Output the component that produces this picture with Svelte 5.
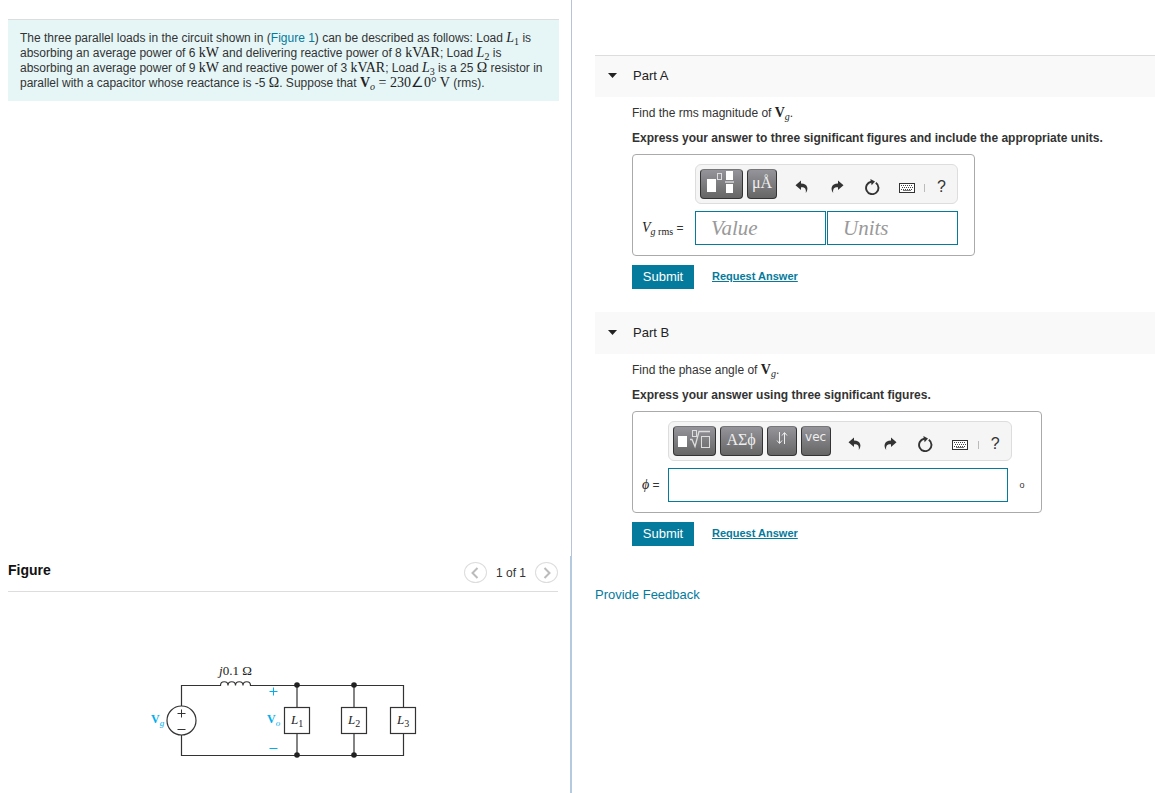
<script>
  const parts = [
    { id: 'a', title: 'Part A', ask: 'Find the rms magnitude of', hint: 'Express your answer to three significant figures and include the appropriate units.' },
    { id: 'b', title: 'Part B', ask: 'Find the phase angle of', hint: 'Express your answer using three significant figures.' }
  ];
  const loads = [
    { x: 297, n: 1 },
    { x: 354, n: 2 },
    { x: 403, n: 3 }
  ];
  let open = $state({ a: true, b: true });
  let value = $state('');
  let units = $state('');
  let phase = $state('');

  function clear(id) {
    if (id === 'a') {
      value = '';
      units = '';
    } else {
      phase = '';
    }
  }
</script>

{#snippet tools(id)}
  <div class="tools">
    <button class="tool" type="button" aria-label="Undo">
      <svg width="14" height="14" viewBox="0 0 14 14"><path d="M6 0.5 0.5 5.3 6 10V7.2C9.8 7 11.4 8.6 10.8 13 13.8 9 13 3.6 6 3.4Z" fill="#333" /></svg>
    </button>
    <button class="tool" type="button" aria-label="Redo">
      <svg width="14" height="14" viewBox="0 0 14 14"><path d="M8 0.5 13.5 5.3 8 10V7.2C4.2 7 2.6 8.6 3.2 13 0.2 9 1 3.6 8 3.4Z" fill="#333" /></svg>
    </button>
    <button class="tool" type="button" aria-label="Reset" onclick={() => clear(id)}>
      <svg width="16" height="16" viewBox="0 0 16 16"><path d="M11.8 3.8A6.200 6.200 0 1 1 7.200 2.800" fill="none" stroke="#333" stroke-width="1.900" /><path d="M6.4 0 11 2.6 7.6 6.2Z" fill="#333" /></svg>
    </button>
    <button class="tool" type="button" aria-label="Keyboard shortcuts">
      <svg class="low" width="18" height="12" viewBox="0 0 18 12">
        <rect x="1.500" y="1.500" width="15" height="9" fill="#fff" stroke="#333" />
        <path d="M3 3.5H15M4 5.5H15M3 7.5H15" stroke="#444" stroke-dasharray="1 1" />
        <path d="M5 8.500H13" stroke="#777" />
      </svg>
    </button>
    <button class="tool help" type="button" aria-label="Help">?</button>
  </div>
{/snippet}

<div class="page">
  <div class="left">
    <section class="problem">
      <p class="intro">
        The three parallel loads in the circuit shown in (<a href="#figure">Figure 1</a>) can be described as follows: Load <span class="m"><i>L</i><sub>1</sub></span> is absorbing an average power of 6 <span class="m">kW</span> and delivering reactive power of 8 <span class="m">kVAR</span>; Load <span class="m"><i>L</i><sub>2</sub></span> is absorbing an average power of 9 <span class="m">kW</span> and reactive power of 3 <span class="m">kVAR</span>; Load <span class="m"><i>L</i><sub>3</sub></span> is a 25 <span class="m">Ω</span> resistor in parallel with a capacitor whose reactance is -5 <span class="m">Ω</span>. Suppose that <span class="m"><b>V</b><sub><i>o</i></sub> = 230∠0° V</span> (rms).
      </p>
    </section>

    <section class="figure" id="figure">
      <header>
        <h2>Figure</h2>
        <nav aria-label="Figures">
          <button class="round" type="button" aria-label="Previous figure">
            <svg width="8" height="12" viewBox="0 0 8 12"><path d="M6.5 1 1.5 6 6.5 11" fill="none" stroke="#bbb" stroke-width="2" /></svg>
          </button>
          <span>1 of 1</span>
          <button class="round" type="button" aria-label="Next figure">
            <svg width="8" height="12" viewBox="0 0 8 12"><path d="M1.5 1 6.5 6 1.5 11" fill="none" stroke="#bbb" stroke-width="2" /></svg>
          </button>
        </nav>
      </header>
      <svg class="circuit" width="270" height="100" viewBox="150 662 270 100" role="img" aria-label="Circuit with source, line reactance and three loads">
        <g fill="none" stroke="#333" stroke-width="1.2">
          <path d="M181.5 706V685.5H220.5C220.5 680.5 228 680.5 228 685.5 228 680.5 235.5 680.5 235.5 685.5 235.5 680.5 243 680.5 243 685.5 243 680.5 250.5 680.5 250.5 685.5H403.5V707M181.5 735V755.5H403.5V734" />
          <path d="M297 685V755M354 685V755" />
          <circle cx="181.5" cy="720.5" r="14.5" />
          <path d="M177.5 713.5H185.5M181.5 709.5V717.5M177.5 729.5H185.5" stroke-width="1" />
        </g>
        {#each loads as load}
          <rect x={load.x - 12.5} y="707.5" width="25" height="26" fill="#fff" stroke="#333" stroke-width="1.2" />
          <text class="dark" x={load.x - 6} y="724"><tspan font-style="italic">L</tspan><tspan font-size="10" dy="3">{load.n}</tspan></text>
        {/each}
        <g fill="#222">
          <circle cx="297" cy="685" r="2.8" />
          <circle cx="354" cy="685" r="2.8" />
          <circle cx="297" cy="755" r="2.8" />
          <circle cx="354" cy="755" r="2.8" />
        </g>
        <text class="dark" x="219" y="675"><tspan font-style="italic">j</tspan>0.1 Ω</text>
        <path d="M269.5 691.5H277.5M273.5 687.5V695.5M269.5 748.5H277.5" stroke="#00aeef" fill="none" />
        <text class="blue" x="151" y="723">V<tspan class="sub" dy="3">g</tspan></text>
        <text class="blue" x="267" y="723">V<tspan class="sub" dy="3">o</tspan></text>
      </svg>
    </section>
  </div>

  <main class="right">
    {#each parts as part}
      <section class="part {part.id}">
        <button class="bar" type="button" aria-expanded={open[part.id]} onclick={() => (open[part.id] = !open[part.id])}>
          <svg width="9" height="5" viewBox="0 0 9 5"><path d="M0 0H9L4.5 5Z" fill="#222" /></svg>
          {part.title}
        </button>
        {#if open[part.id]}
          <div class="body">
            <p>{part.ask} <span class="m"><b>V</b><sub><i>g</i></sub></span>.</p>
            <p class="hint">{part.hint}</p>

            {#if part.id === 'a'}
              <div class="answer">
                <div class="toolbar">
                  <button class="key wide" type="button" aria-label="Templates">
                    <svg width="30" height="24" viewBox="0 0 30 24"><path d="M0 9H9V22H0ZM19 1H26V10H19ZM19 14H26V23H19ZM18 11.5H27V12.5H18Z" fill="#fff" /><rect x="10.5" y="3.5" width="4" height="6" fill="none" stroke="#ddd" /></svg>
                  </button>
                  <button class="key" type="button" aria-label="Units">μÅ</button>
                  {@render tools('a')}
                </div>
                <label class="name" for="value"><span class="m"><i>V</i><sub><i>g</i> rms</sub></span> =</label>
                <div class="fields">
                  <input id="value" placeholder="Value" bind:value />
                  <input aria-label="Units" placeholder="Units" bind:value={units} />
                </div>
              </div>
            {:else}
              <div class="answer">
                <div class="toolbar">
                  <button class="key wide" type="button" aria-label="Templates">
                    <svg width="34" height="22" viewBox="0 0 34 22"><path d="M1 9H10V20H1Z" fill="#fff" /><g fill="none" stroke="#ddd"><rect x="15.5" y="3.5" width="4" height="6" /><path d="M13 12.5H15L18 19.5 22 4.5H33" stroke-width="1.3" /><rect x="24.5" y="9.5" width="8" height="11" /></g></svg>
                  </button>
                  <button class="key wide" type="button" aria-label="Greek letters">ΑΣϕ</button>
                  <button class="key" type="button" aria-label="Sub and superscript">
                    <svg width="12" height="20" viewBox="0 -4 12 20"><path d="M3.5 1V12M1 9.5 3.5 12.5 6 9.5M8.5 13V2M6 4.5 8.5 1.5 11 4.5" fill="none" stroke="#eee" /></svg>
                  </button>
                  <button class="key vec" type="button">vec</button>
                  {@render tools('b')}
                </div>
                <label class="name" for="phase"><span class="m"><i>ϕ</i></span> =</label>
                <div class="fields">
                  <input id="phase" bind:value={phase} />
                </div>
                <span class="degree">o</span>
              </div>
            {/if}

            <div class="actions">
              <button class="submit" type="button">Submit</button>
              <a href="#request">Request Answer</a>
            </div>
          </div>
        {/if}
      </section>
    {/each}
    <a class="feedback" href="#feedback">Provide Feedback</a>
  </main>
</div>

<style>
  :global(body) {
    margin: 0;
    background: #fff;
  }
  .page {
    display: grid;
    grid-template-columns: 572fr 583fr;
    min-height: 100vh;
    font: 12px/15px "Liberation Sans", Arial, sans-serif;
    color: #333;
  }
  button,
  input {
    font: inherit;
    box-sizing: border-box;
  }
  button {
    padding: 0;
    border: 0;
    background: none;
    cursor: pointer;
  }
  p,
  h2 {
    margin: 0;
  }
  a {
    color: #047a9c;
    text-decoration: none;
  }
  .m {
    font: 14px/0 "Liberation Serif", "Times New Roman", serif;
    color: #222;
  }
  .m sub {
    font-size: 10px;
    line-height: 0;
    vertical-align: -3px;
  }

  .left {
    display: flex;
    flex-direction: column;
  }
  .problem {
    flex: 1;
    padding: 19px 12px 0 8px;
    border-right: 1px solid #b5c4d8;
  }
  .intro {
    padding: 11px 11px 10px 12px;
    border-top: 1px solid #ddd;
    background: #e6f6f7;
  }
  .figure {
    padding: 0 12px 31px 8px;
    border-right: 2px solid #b5c9df;
  }
  .figure header {
    display: flex;
    justify-content: space-between;
    height: 35px;
    border-bottom: 1px solid #ddd;
  }
  h2 {
    font-size: 14px;
    line-height: 28px;
    color: #111;
  }
  nav {
    display: flex;
    align-items: center;
    gap: 9px;
    height: 33px;
  }
  nav span {
    padding-top: 2px;
  }
  .round {
    display: flex;
    align-items: center;
    justify-content: center;
    width: 23px;
    height: 21px;
    border: 1px solid #ddd;
    border-radius: 50%;
  }
  .circuit {
    display: block;
    margin: 70px auto 0 142px;
    font: 13px "Liberation Serif", "Times New Roman", serif;
  }
  .dark {
    fill: #222;
  }
  .blue {
    fill: #00aeef;
    font-weight: bold;
    font-size: 12px;
  }
  .sub {
    font-size: 9px;
    font-style: italic;
    font-weight: normal;
  }

  .right {
    padding: 55px 0 0 23px;
  }
  .part {
    margin-bottom: 23px;
  }
  .part.a .bar {
    border-top: 1px solid #ddd;
  }
  .bar {
    display: flex;
    align-items: center;
    gap: 16px;
    width: 100%;
    height: 42px;
    padding: 0 0 2px 13px;
    background: #f9f9f9;
    color: #222;
    font-size: 13px;
  }
  .body {
    padding-left: 37px;
  }
  .body p {
    padding-top: 9px;
    margin-bottom: 1px;
  }
  .body .hint {
    margin-bottom: 8px;
    font-weight: bold;
  }
  .answer {
    display: grid;
    grid-template-columns: repeat(3, auto);
    align-items: center;
    row-gap: 7px;
    width: fit-content;
    padding: 9px 16px 10px 9px;
    border: 1px solid #aaa;
    border-radius: 4px;
  }
  .toolbar {
    grid-column: 2;
    display: flex;
    align-items: center;
    gap: 4px;
    padding: 4px 0 4px 4px;
    border: 1px solid #ddd;
    border-radius: 6px;
    background: #f5f5f5;
  }
  .key {
    display: flex;
    justify-content: center;
    width: 30px;
    height: 30px;
    border: 1px solid #333;
    border-top-color: #777;
    border-radius: 4px;
    background: linear-gradient(#94949a, #666);
    color: #eee;
    font: 16px/25px "Liberation Serif", serif;
  }
  .wide {
    width: 43px;
  }
  .vec {
    font: 12px/20px "DejaVu Sans", sans-serif;
  }
  .tools {
    display: flex;
    padding-left: 3px;
  }
  .tool {
    display: flex;
    align-items: center;
    justify-content: center;
    width: 35px;
    height: 30px;
    padding-top: 5px;
  }
  .help {
    width: 33px;
    padding-left: 2px;
    color: #333;
    font-size: 16px;
    background: linear-gradient(#bbb, #bbb) 0 15px / 1px 8px no-repeat;
  }
  .low {
    margin-top: 2px;
  }
  .name {
    grid-column: 1;
    padding-right: 8px;
    white-space: nowrap;
  }
  .part.a .name {
    min-width: 45px;
  }
  .fields {
    display: flex;
    gap: 1px;
  }
  .fields input {
    flex: 1;
    min-width: 0;
    width: 0;
    height: 34px;
    padding: 0 15px;
    border: 1px solid #047a9c;
    border-radius: 0;
    font: 21px "Liberation Serif", serif;
  }
  .fields input::placeholder {
    color: #999;
    font-style: italic;
  }
  .degree {
    padding-left: 8px;
    font-size: 9px;
  }
  .part.b .fields {
    padding-right: 4px;
  }
  .actions {
    display: flex;
    align-items: center;
    gap: 18px;
    margin-top: 9px;
  }
  .submit {
    width: 62px;
    height: 24px;
    padding-bottom: 2px;
    background: #047a9c;
    color: #fff;
    font-size: 13px;
  }
  .actions a {
    padding-bottom: 1px;
    font-size: 11px;
    font-weight: bold;
    text-decoration: underline;
  }
  .feedback {
    display: inline-block;
    margin-top: 18px;
    font-size: 13px;
  }
</style>
